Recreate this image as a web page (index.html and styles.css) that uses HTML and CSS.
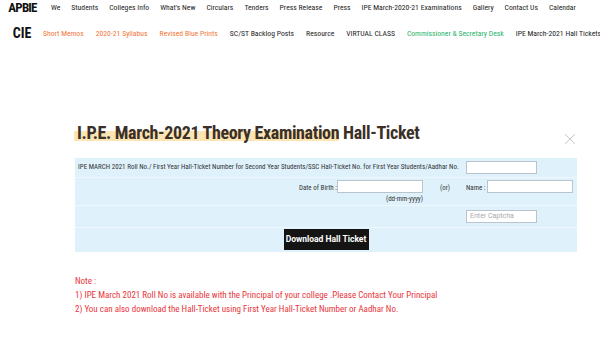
FILE: index.html
```html
<!DOCTYPE html>
<html>
<head>
<meta charset="utf-8">
<link rel="stylesheet" href="styles.css">
</head>
<body>
<header class="nav">
  <div class="nav-row">
    <div class="logo logo-top">APBIE</div>
    <ul class="menu menu-top">
      <li>We</li><li>Students</li><li>Colleges Info</li><li>What's New</li><li>Circulars</li><li>Tenders</li><li>Press Release</li><li>Press</li><li>IPE March-2020-21 Examinations</li><li>Gallery</li><li>Contact Us</li><li>Calendar</li>
    </ul>
  </div>
  <div class="nav-row">
    <div class="logo">CIE</div>
    <ul class="menu menu-sub">
      <li class="orange">Short Memos</li><li class="orange">2020-21 Syllabus</li><li class="orange">Revised Blue Prints</li><li>SC/ST Backlog Posts</li><li>Resource</li><li>VIRTUAL CLASS</li><li class="green">Commissioner &amp; Secretary Desk</li><li>IPE March-2021 Hall Tickets</li>
    </ul>
  </div>
</header>

<main class="content">
  <div class="title-row">
    <h1 class="title"><span class="hl">I.P.E. March-2021 Theory Examination</span> Hall-Ticket</h1>
    <span class="close">
      <svg width="12" height="12" viewBox="0 0 12 12"><path d="M1 1L11 11M11 1L1 11" stroke="#c8c8c8" stroke-width="1"/></svg>
    </span>
  </div>

  <table class="form">
    <colgroup><col class="c1"><col class="c2"><col class="c3"><col class="c4"></colgroup>
    <tr class="r1">
      <td colspan="3" class="lbl-long">IPE MARCH 2021 Roll No./ First Year Hall-Ticket Number for Second Year Students/SSC Hall-Ticket No. for First Year Students/Aadhar No.</td>
      <td><input class="inp inp-short" type="text"></td>
    </tr>
    <tr class="r2">
      <td class="dob-lbl">Date of Birth :</td>
      <td class="dob"><input class="inp inp-dob" type="text"><div class="fmt">(dd-mm-yyyy)</div></td>
      <td class="or">(or)</td>
      <td class="name"><span class="name-lbl">Name :</span><input class="inp inp-name" type="text"></td>
    </tr>
    <tr class="r3">
      <td colspan="3"></td>
      <td><input class="inp inp-short" type="text" placeholder="Enter Captcha"></td>
    </tr>
    <tr class="r4">
      <td colspan="4" class="btn-cell"><button class="btn">Download Hall Ticket</button></td>
    </tr>
  </table>

  <div class="note">
    <p>Note :</p>
    <p>1) IPE March 2021 Roll No is available with the Principal of your college .Please Contact Your Principal</p>
    <p>2) You can also download the Hall-Ticket using First Year Hall-Ticket Number or Aadhar No.</p>
  </div>
</main>
</body>
</html>
```

FILE: styles.css
```css
* { box-sizing: border-box; }
html, body { margin: 0; padding: 0; background: #fff; }
body {
  font-family: Roboto, "Liberation Sans", sans-serif;
  font-stretch: condensed;
  color: #222;
  width: 600px;
  height: 338px;
  overflow: hidden;
}
.nav { padding-top: 0; margin-top: -3px; }
.nav-row {
  display: flex;
  align-items: center;
  height: 20px;
  white-space: nowrap;
  overflow: hidden;
}
.nav-row + .nav-row { margin-top: 6px; }
.logo {
  width: 44px;
  flex: none;
  text-align: center;
  font-weight: 700;
  font-size: 14px;
  color: #111;
}
.logo-top { font-size: 13px; letter-spacing: -0.8px; padding-left: 1px; }
.menu {
  list-style: none;
  margin: 0;
  padding: 0;
  display: flex;
  gap: 11px;
  font-size: 7.7px;
  font-weight: 400;
  color: #1c1c1c;
}
.menu li { flex: none; }
.menu-top { margin-left: 7px; }
.menu-sub { margin-left: -1px; gap: 12px; }
.menu li.orange { color: #f0783a; }
.menu li.green { color: #27b36a; }

.content {
  margin: 75px 0 0 75px;
  width: 502px;
}
.title-row {
  display: flex;
  align-items: center;
  justify-content: space-between;
  height: 28px;
}
.title {
  margin: 0 0 0 2px;
  font-size: 18px;
  font-weight: 700;
  color: #3b3027;
  letter-spacing: -0.35px;
}
.hl {
  background: linear-gradient(to bottom, transparent 45%, #fde4b3 45%, #fde4b3 90%, transparent 90%);
  margin-left: -3px;
  padding-left: 3px;
}
.close { margin-right: 1px; margin-top: 14px; display: flex; }

.form {
  margin-top: 12px;
  width: 502px;
  border-collapse: collapse;
  background: #dff2fc;
  table-layout: fixed;
  font-size: 7px;
  color: #333;
}
.c1 { width: 262px; }
.c2 { width: 93px; }
.c3 { width: 36px; }
.c4 { width: 111px; }
.form td { padding: 0; vertical-align: middle; }
.form tr + tr td { border-top: 1px solid #eef8fe; }
.r1 { height: 19px; }
.r2 { height: 28px; }
.r3 { height: 22px; }
.r4 { height: 25px; }
.lbl-long { padding-left: 3px !important; white-space: nowrap; }
.inp {
  display: block;
  height: 13px;
  border: 1px solid #b9c4cc;
  background: #fff;
  padding: 0 3px;
  font-family: inherit;
  font-size: 7px;
  color: #999;
}
.inp::placeholder { color: #aaa; }
.inp-short { width: 71px; }
.inp-dob { width: 86px; }
.inp-name { width: 86px; }
.r2 td { vertical-align: top; padding-top: 2px; }
.dob-lbl { text-align: right; padding-top: 6px !important; }
.fmt { width: 86px; text-align: right; margin-top: 2px; font-size: 7px; }
.or { padding-top: 6px !important; padding-left: 10px !important; }
.name { white-space: nowrap; }
.name-lbl { display: inline-block; width: 21px; vertical-align: top; padding-top: 4px; }
.name .inp { display: inline-block; vertical-align: top; }
.btn-cell { text-align: center; vertical-align: top !important; }
.btn {
  display: inline-block;
  margin-top: 1px;
  width: 85px;
  height: 21px;
  background: #141414;
  color: #fff;
  border: none;
  font-family: inherit;
  font-weight: 700;
  font-size: 8.5px;
  white-space: nowrap;
  padding: 0;
}

.note {
  margin-top: 22px;
  color: #e8363c;
  font-size: 9px;
  line-height: 14px;
}
.note p { margin: 0; }
```
